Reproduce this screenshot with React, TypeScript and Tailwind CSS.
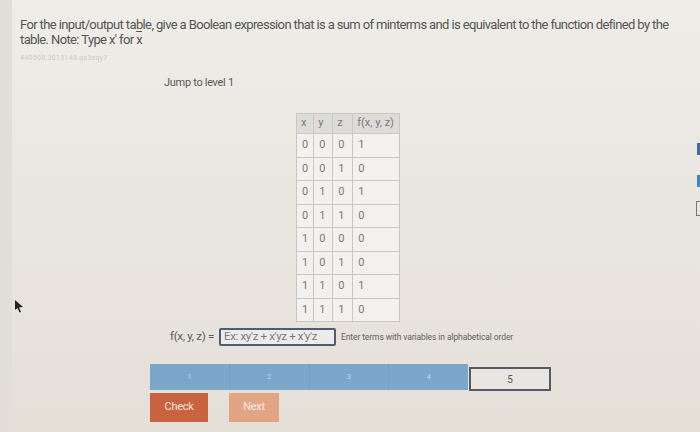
const rows = [
  ['0', '0', '0', '1'],
  ['0', '0', '1', '0'],
  ['0', '1', '0', '1'],
  ['0', '1', '1', '0'],
  ['1', '0', '0', '0'],
  ['1', '0', '1', '0'],
  ['1', '1', '0', '1'],
  ['1', '1', '1', '0'],
];

const cols = ['w-[17px]', 'w-[19px]', 'w-[20px]', 'w-[47px]'];

function TruthTable() {
  return (
    <table className="border-collapse text-[11px] text-[#7a7a7a] bg-[#f3f1ed]">
      <thead>
        <tr className="h-[20px] bg-[#dedcd8]">
          {['x', 'y', 'z', 'f(x, y, z)'].map((h, i) => (
            <th key={h} className={`${cols[i]} border border-[#c9c7c3] px-[4px] text-left font-normal`}>
              {h}
            </th>
          ))}
        </tr>
      </thead>
      <tbody>
        {rows.map((r, i) => (
          <tr key={i} className="h-[23.5px]">
            {r.map((v, j) => (
              <td key={j} className={`${cols[j]} border border-[#c9c7c3] px-[5px] text-left`}>
                {v}
              </td>
            ))}
          </tr>
        ))}
      </tbody>
    </table>
  );
}

function Progress() {
  return (
    <div className="flex items-start">
      <div className="flex h-[26px] w-[318px] bg-[#7ba7c9]">
        {['1', '2', '3', '4'].map((n, i) => (
          <div
            key={n}
            className={`flex flex-1 items-center justify-center text-[7px] text-[#c5dbe9] ${i < 3 ? 'border-r border-dotted border-[#6f9abb]' : ''}`}
          >
            {n}
          </div>
        ))}
      </div>
      <div className="ml-[1px] mt-[3px] flex h-[24px] w-[82px] items-center justify-center border-2 border-[#55596a] bg-[#e9e6e1] text-[10px] text-[#555]">
        5
      </div>
    </div>
  );
}

export default function App() {
  return (
    <div
      className="relative flex h-[432px] w-[700px] overflow-hidden bg-gradient-to-b from-[#efede8] to-[#e4e0d8] text-[#555]"
      style={{ fontFamily: 'Roboto, "Liberation Sans", sans-serif' }}
    >
      <div className="h-full w-[12px] shrink-0 bg-[#e2dfd9]" />
      <div className="flex flex-1 flex-col pl-[8px] pt-[17px]">
        <p className="w-[672px] text-[13px] leading-[15px] tracking-[-0.62px] text-[#565656]">
          For the input/output table, give a Boolean expression that is a sum of minterms and is equivalent to the function defined by the table. Note: Type x' for <span className="overline">x</span>
        </p>
        <div className="mt-[7px] text-[7px] leading-[8px] tracking-[0.3px] text-[#cdc9c1]">440508.3013148.qx3zqy7</div>
        <div className="ml-[144px] mt-[14px] text-[11px] leading-[14px] tracking-[-0.3px] text-[#5a5a5a]">
          Jump to level 1
        </div>
        <div className="ml-[276px] mt-[23px]">
          <TruthTable />
        </div>
        <div className="ml-[150px] mt-[6px] flex items-center">
          <span className="text-[11.5px] tracking-[-0.3px] text-[#5a5a5a]">f(x, y, z) =</span>
          <div className="ml-[5px] flex h-[18px] w-[117px] items-center rounded-[2px] border-2 border-[#4c5b78] bg-[#eeece8] px-[3px] text-[11.5px] tracking-[-0.35px] text-[#7a7a7a]">
            Ex: xy'z + x'yz + x'y'z
          </div>
          <span className="ml-[5px] text-[8.5px] tracking-[-0.1px] text-[#5f5f5f]">
            Enter terms with variables in alphabetical order
          </span>
        </div>
        <div className="ml-[130px] mt-[18px]">
          <Progress />
        </div>
        <div className="ml-[130px] mt-[2px] flex gap-[21px]">
          <button className="flex h-[29px] w-[58px] items-center justify-center bg-[#c9633f] text-[11px] tracking-[-0.3px] text-[#f8e6dd]">
            Check
          </button>
          <button className="flex h-[29px] w-[50px] items-center justify-center bg-[#e2a583] text-[11px] tracking-[-0.3px] text-[#f8ebe3]">
            Next
          </button>
        </div>
      </div>
      <svg className="absolute left-[13px] top-[299px]" width="12" height="14" viewBox="0 0 12 14">
        <path d="M2 1 L10 8 L6 8.5 L8 13 L6.5 13.5 L4.5 9 L2 11 Z" fill="#222" />
      </svg>
      <div className="absolute right-0 top-[143px] h-[12px] w-[3px] bg-[#3f6e9c]" />
      <div className="absolute right-0 top-[175px] h-[12px] w-[3px] bg-[#3f86c0]" />
      <div className="absolute right-0 top-[201px] h-[15px] w-[4px] border border-r-0 border-[#777]" />
    </div>
  );
}
